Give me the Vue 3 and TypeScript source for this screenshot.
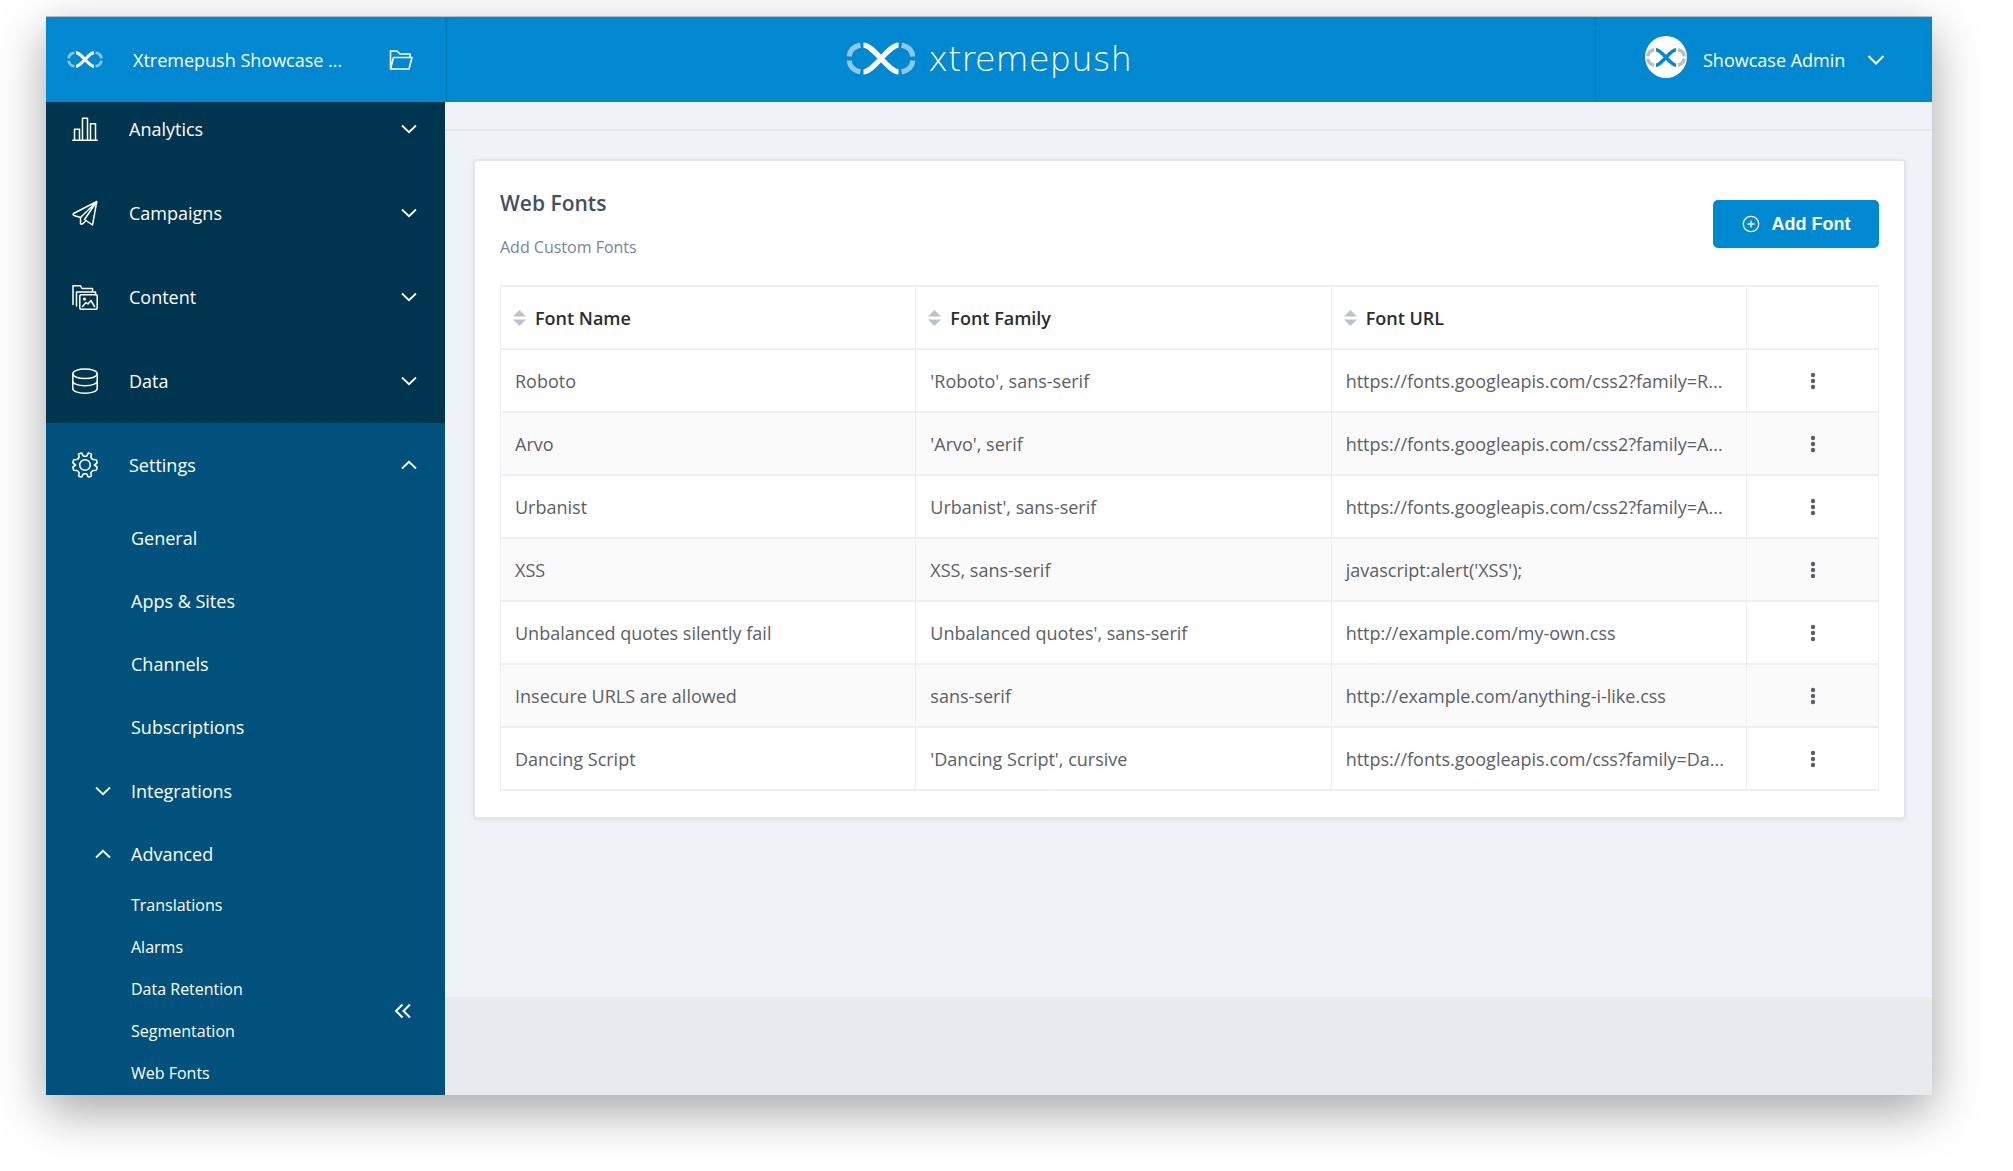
<script setup lang="ts">
import { ref } from 'vue'

interface FontRow {
  name: string
  family: string
  url: string
}

interface NavItem {
  label: string
  icon: string
}

const columns: string[] = ['Font Name', 'Font Family', 'Font URL']

const fonts: FontRow[] = [
  { name: 'Roboto', family: "'Roboto', sans-serif", url: 'https://fonts.googleapis.com/css2?family=R...' },
  { name: 'Arvo', family: "'Arvo', serif", url: 'https://fonts.googleapis.com/css2?family=A...' },
  { name: 'Urbanist', family: "Urbanist', sans-serif", url: 'https://fonts.googleapis.com/css2?family=A...' },
  { name: 'XSS', family: 'XSS, sans-serif', url: "javascript:alert('XSS');" },
  { name: 'Unbalanced quotes silently fail', family: "Unbalanced quotes', sans-serif", url: 'http://example.com/my-own.css' },
  { name: 'Insecure URLS are allowed', family: 'sans-serif', url: 'http://example.com/anything-i-like.css' },
  { name: 'Dancing Script', family: "'Dancing Script', cursive", url: 'https://fonts.googleapis.com/css?family=Da...' },
]

const navItems: NavItem[] = [
  { label: 'Analytics', icon: 'analytics' },
  { label: 'Campaigns', icon: 'campaigns' },
  { label: 'Content', icon: 'content' },
  { label: 'Data', icon: 'data' },
]

const settingsPages: string[] = ['General', 'Apps & Sites', 'Channels', 'Subscriptions']
const advancedPages: string[] = ['Translations', 'Alarms', 'Data Retention', 'Segmentation', 'Web Fonts']

const advancedOpen = ref<boolean>(true)
</script>

<template>
  <div class="stage">
    <div class="window">
      <header class="topbar">
        <div class="project">
          <svg class="mark mark-small" viewBox="0 0 68 32" aria-hidden="true">
            <g fill="none" stroke-width="5">
              <g class="arcs">
                <path d="M14 3Q4 5 3 14M14 29Q4 27 3 18M54 3Q64 5 65 14M54 29Q64 27 65 18" />
              </g>
              <path class="cross" stroke-width="6" d="M17 3C27 3 41 29 51 29M51 3C41 3 27 29 17 29" />
            </g>
          </svg>
          <span class="project-name">Xtremepush Showcase ...</span>
          <button class="icon-button" type="button" aria-label="Open project">
            <svg width="24" height="22" viewBox="0 0 24 22" fill="none" stroke="currentColor" stroke-width="1.6" stroke-linejoin="round">
              <path d="M1.5 19.5V2h6.5l3 3h10v3.5M1.5 20 4.500 8.500H23l-3 11.500z" />
            </svg>
          </button>
        </div>
        <div class="brand">
          <svg class="mark" width="70" height="33" viewBox="0 0 68 32" aria-hidden="true">
            <g fill="none" stroke-width="5">
              <g class="arcs">
                <path d="M14 3Q4 5 3 14M14 29Q4 27 3 18M54 3Q64 5 65 14M54 29Q64 27 65 18" />
              </g>
              <path class="cross" d="M17 3C27 3 41 29 51 29M51 3C41 3 27 29 17 29" />
            </g>
          </svg>
          <span class="wordmark">xtremepush</span>
        </div>
        <button class="account" type="button">
          <span class="avatar">
            <svg class="mark" width="40" height="19" viewBox="0 0 68 32" aria-hidden="true">
              <g fill="none" stroke-width="6">
                <g class="arcs">
                  <path d="M14 3Q4 5 3 14M14 29Q4 27 3 18M54 3Q64 5 65 14M54 29Q64 27 65 18" />
                </g>
                <path class="cross" d="M17 3C27 3 41 29 51 29M51 3C41 3 27 29 17 29" />
              </g>
            </svg>
          </span>
          <span class="account-name">Showcase Admin</span>
          <svg width="18" height="12" viewBox="0 0 18 12" fill="none" stroke="currentColor" stroke-width="2">
            <path d="M1.500 2 9 9.500 16.500 2" />
          </svg>
        </button>
      </header>

      <div class="body">
        <nav class="sidebar" aria-label="Main">
          <div class="nav-scroll">
            <button v-for="item in navItems" :key="item.label" class="nav-item" type="button">
              <svg class="nav-icon" viewBox="0 0 26 26" fill="none" stroke="currentColor" stroke-width="1.500" stroke-linejoin="round" stroke-linecap="round">
                <path v-if="item.icon === 'analytics'" d="M.8 24.300H25.200M2.500 24V13.200H7.500V24M10.500 24V2.200H15.500V24M18.500 24V7.700H23.500V24" />
                <path v-else-if="item.icon === 'campaigns'" d="M24.800 1.500 1.500 13.500Q.5 14.500 2 15.500L8.500 17.500 24.800 1.500 20.500 25 12.500 19.500 24.800 1.500M8.500 17.500V23.500Q9.500 25 11 23.500L14 20.800" />
                <g v-else-if="item.icon === 'content'">
                  <path d="M1 20.500V1.800H8.500L10 4.500H20.500V7M4.500 22V8H23.500V10.500" />
                  <rect x="7.800" y="10.800" width="17.400" height="14.400" rx="1.200" />
                  <path d="M10.500 22.500 14 18.500 16 20 19 16.500 22.500 22.500" />
                  <circle cx="12.500" cy="15" r=".8" />
                </g>
                <g v-else>
                  <ellipse cx="13" cy="5.800" rx="12.200" ry="4.800" />
                  <path d="M.8 5.800V20.500C.8 23.200 6 25.200 13 25.200S25.200 23.200 25.200 20.500V5.800M.8 13C.8 15.700 6 17.700 13 17.700S25.200 15.700 25.200 13" />
                </g>
              </svg>
              <span class="nav-label">{{ item.label }}</span>
              <svg class="chevron" viewBox="0 0 16 10" fill="none" stroke="currentColor" stroke-width="1.800">
                <path d="M1 1.500 8 8.200 15 1.500" />
              </svg>
            </button>

            <div class="nav-open">
              <button class="nav-item" type="button" aria-expanded="true">
                <svg class="nav-icon" viewBox="0 0 26 26" fill="none" stroke="currentColor" stroke-width="1.600" stroke-linejoin="round">
                  <path d="M9.600 1 11.200 3.900Q13 4.600 14.800 3.900L16.400 1Q18.300 1.200 19.400 2.200L18.900 5.400Q19.700 7.100 21.300 7.500L24.200 7.800Q25.200 9.200 25 11L22.400 13Q22.400 13 25 15Q25.200 16.800 24.200 18.200L21.300 18.500Q19.700 18.900 18.900 20.600L19.400 23.800Q18.300 24.800 16.400 25L14.800 22.100Q13 21.400 11.200 22.100L9.600 25Q7.700 24.800 6.600 23.800L7.100 20.600Q6.300 18.900 4.700 18.500L1.800 18.200Q.8 16.800 1 15L3.600 13 1 11Q.8 9.200 1.800 7.800L4.700 7.500Q6.300 7.100 7.100 5.400L6.600 2.200Q7.700 1.200 9.600 1Z" />
                  <circle cx="13" cy="13" r="5.300" />
                </svg>
                <span class="nav-label">Settings</span>
                <svg class="chevron flipped" viewBox="0 0 16 10" fill="none" stroke="currentColor" stroke-width="1.800">
                  <path d="M1 1.500 8 8.200 15 1.500" />
                </svg>
              </button>
              <a v-for="page in settingsPages" :key="page" class="sub-item" href="#">{{ page }}</a>
              <button class="sub-item" type="button" aria-expanded="false">
                <svg class="chevron" viewBox="0 0 16 10" fill="none" stroke="currentColor" stroke-width="1.800">
                  <path d="M1 1.500 8 8.200 15 1.500" />
                </svg>
                Integrations
              </button>
              <button class="sub-item" type="button" :aria-expanded="advancedOpen" @click="advancedOpen = !advancedOpen">
                <svg class="chevron" :class="{ flipped: advancedOpen }" viewBox="0 0 16 10" fill="none" stroke="currentColor" stroke-width="1.800">
                  <path d="M1 1.500 8 8.200 15 1.500" />
                </svg>
                Advanced
              </button>
              <template v-if="advancedOpen">
                <a v-for="page in advancedPages" :key="page" class="leaf-item" href="#">{{ page }}</a>
              </template>
            </div>
          </div>
          <button class="collapse" type="button" aria-label="Collapse menu">
            <svg width="18" height="16" viewBox="0 0 18 16" fill="none" stroke="currentColor" stroke-width="2">
              <path d="M8.500 1.500 2 8 8.500 14.500M16 1.500 9.500 8 16 14.500" />
            </svg>
          </button>
        </nav>

        <div class="content">
          <div class="strip"></div>
          <main class="main">
            <section class="card">
              <div class="card-head">
                <div>
                  <h1 class="title">Web Fonts</h1>
                  <p class="subtitle">Add Custom Fonts</p>
                </div>
                <button class="add" type="button">
                  <svg width="18" height="18" viewBox="0 0 18 18" fill="none" stroke="currentColor" stroke-width="1.300">
                    <circle cx="9" cy="9" r="7.700" />
                    <path d="M9 5.500V12.500M5.500 9H12.500" />
                  </svg>
                  Add Font
                </button>
              </div>
              <table class="grid">
                <colgroup>
                  <col />
                  <col />
                  <col />
                  <col class="col-actions" />
                </colgroup>
                <thead>
                  <tr>
                    <th v-for="column in columns" :key="column" scope="col">
                      <button class="sort" type="button">
                        <svg width="13" height="16" viewBox="0 0 13 16" fill="#bcc1cb" aria-hidden="true">
                          <path d="M6.500 0 13 6.500H0zM0 9.500H13L6.500 16z" />
                        </svg>
                        {{ column }}
                      </button>
                    </th>
                    <td></td>
                  </tr>
                </thead>
                <tbody>
                  <tr v-for="font in fonts" :key="font.name">
                    <td>{{ font.name }}</td>
                    <td>{{ font.family }}</td>
                    <td>{{ font.url }}</td>
                    <td class="actions">
                      <button class="kebab" type="button" :aria-label="`Actions for ${font.name}`">
                        <svg width="6" height="18" viewBox="0 0 6 18" fill="currentColor">
                          <circle cx="3" cy="3" r="2.200" />
                          <circle cx="3" cy="9" r="2.200" />
                          <circle cx="3" cy="15" r="2.200" />
                        </svg>
                      </button>
                    </td>
                  </tr>
                </tbody>
              </table>
            </section>
          </main>
          <footer class="foot"></footer>
        </div>
      </div>
    </div>
  </div>
</template>

<style>
body {
  margin: 0;
  background: #fff;
}
</style>

<style scoped>
.stage {
  box-sizing: border-box;
  padding: 17px 81px 76px 46px;
  overflow: hidden;
  font-family: "Open Sans", "Noto Sans", sans-serif;
  font-size: 18px;
  line-height: 24px;
}

.stage *,
.stage *::before {
  box-sizing: border-box;
}

button {
  margin: 0;
  padding: 0;
  border: 0;
  background: none;
  color: inherit;
  font: inherit;
  text-align: left;
  cursor: pointer;
}

a {
  color: inherit;
  text-decoration: none;
}

svg {
  display: block;
  flex: none;
}

.window {
  box-shadow: 0 -1px 0 #b5bcc2, 0 16px 46px rgba(0, 0, 0, 0.36);
}

/* Top bar */
.topbar {
  position: relative;
  z-index: 1;
  display: flex;
  height: 85px;
  background: #0088d1;
  color: #fff;
}

.project {
  display: flex;
  flex: none;
  align-items: center;
  width: 401px;
  padding: 0 33px 0 21px;
  border-right: 1px solid #0072b3;
}

.project-name {
  flex: 1;
  padding-left: 30px;
  white-space: nowrap;
}

.mark .arcs {
  stroke: #8fc6ea;
}

.mark .cross {
  stroke: #fff;
}

.mark-small {
  width: 36px;
  height: 17px;
}

.brand {
  display: flex;
  flex: 1;
  align-items: center;
  justify-content: center;
  gap: 12px;
  padding: 0 64px 2px 0;
}

.wordmark {
  font-family: "DejaVu Sans", sans-serif;
  font-size: 34px;
  font-weight: 200;
  line-height: 34px;
}

.account {
  display: flex;
  flex: none;
  align-items: center;
  width: 337px;
  padding: 0 47px 0 49px;
  border-left: 1px solid #0072b3;
}

.avatar {
  display: flex;
  align-items: center;
  justify-content: center;
  width: 42px;
  height: 42px;
  margin-bottom: 5px;
  border-radius: 50%;
  background: #fff;
}

.avatar .arcs {
  stroke: #b9bfc4;
}

.avatar .cross {
  stroke: #0088d1;
}

.account-name {
  flex: 1;
  padding-left: 16px;
}

/* Sidebar */
.body {
  display: flex;
}

.sidebar {
  position: relative;
  flex: none;
  width: 399px;
  background: #003550;
  color: #fff;
}

.nav-scroll {
  margin-top: -15px;
}

.nav-item {
  display: flex;
  align-items: center;
  width: 100%;
  height: 84px;
  padding: 0 28px 0 26px;
}

.nav-icon {
  width: 26px;
  height: 26px;
}

.nav-label {
  flex: 1;
  padding-left: 31px;
}

.chevron {
  width: 16px;
  height: 10px;
}

.flipped {
  transform: rotate(180deg);
}

.nav-open {
  background: #00517c;
}

.sub-item,
.leaf-item {
  display: flex;
  align-items: center;
  width: 100%;
  height: 63px;
  padding: 0 0 2px 85px;
}

button.sub-item {
  gap: 20px;
  padding: 0 0 0 49px;
}

.leaf-item {
  height: 42px;
  font-size: 16px;
}

.collapse {
  position: absolute;
  right: 33px;
  bottom: 76px;
}

/* Content */
.content {
  display: flex;
  flex: 1;
  flex-direction: column;
  min-width: 0;
  background: #eff3f8;
}

.strip {
  height: 29px;
  border-bottom: 2px solid #e4e7ea;
}

.main {
  flex: 1;
  padding: 28px 26px 28px 28px;
}

.card {
  padding: 26px 25px;
  border: 2px solid #e0e5ee;
  border-radius: 4px;
  background: #fff;
  box-shadow: 0 2px 4px rgba(60, 80, 120, 0.08);
}

.card-head {
  display: flex;
  align-items: flex-start;
  justify-content: space-between;
  height: 98px;
}

.title {
  margin: 2px 0 0;
  color: #454f63;
  font-size: 21px;
  font-weight: 600;
  line-height: 28px;
}

.subtitle {
  margin: 18px 0 0;
  color: #78849e;
  font-size: 16px;
}

.add {
  display: flex;
  align-items: center;
  justify-content: center;
  gap: 12px;
  width: 166px;
  height: 48px;
  margin-top: 13px;
  border-radius: 5px;
  background: #0088d1;
  color: #fff;
  font-family: "Liberation Sans", Arial, sans-serif;
  font-weight: 700;
}

.grid {
  width: 100%;
  border-collapse: collapse;
  table-layout: fixed;
  color: #5c6066;
}

.col-actions {
  width: 132px;
}

.grid th,
.grid td {
  height: 63px;
  padding: 0 0 0 14px;
  border: solid #edeff5;
  border-width: 2px 1px;
  text-align: left;
  white-space: nowrap;
}

.grid th {
  padding-left: 12px;
}

.grid tbody tr:nth-child(even) {
  background: #fafafa;
}

.sort {
  display: flex;
  align-items: center;
  gap: 9px;
  color: #2b2d31;
  font-weight: 600;
}

.grid .actions {
  padding: 0;
}

.kebab {
  display: flex;
  justify-content: center;
  width: 100%;
}

.foot {
  height: 98px;
  background: #e9eaeb;
}
</style>
